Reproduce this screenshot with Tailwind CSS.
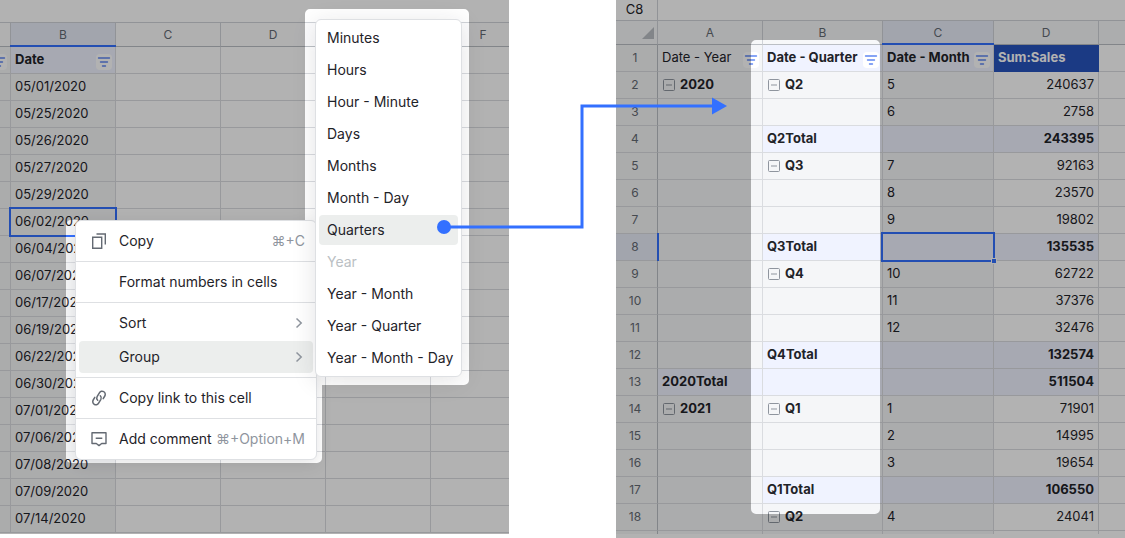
<!DOCTYPE html>
<html lang="en">
<head>
<meta charset="utf-8">
<meta name="viewport" content="width=device-width, initial-scale=1">
<title>Group dates in a pivot table</title>
<script src="https://cdn.jsdelivr.net/npm/@tailwindcss/browser@4"></script>
</head>
<body class="bg-white font-['Inter',sans-serif] text-[13px] text-[#1f2329]">
<svg class="hidden" aria-hidden="true">
  <symbol id="filter" viewBox="0 0 16 16"><path d="M2.5 4h11M4.5 8h7M6.5 12h3" fill="none" stroke="#5f86f2" stroke-width="1.4" stroke-linecap="round"/></symbol>
  <symbol id="minus" viewBox="0 0 12 12"><rect x=".5" y=".5" width="11" height="11" rx="1" fill="none" stroke="#8f959e"/><path d="M3 6h6" stroke="#8f959e"/></symbol>
  <symbol id="chevron" viewBox="0 0 16 16"><path d="M5.5 3.5 10.200 8l-4.700 4.500" fill="none" stroke="#8f959e" stroke-width="1.500"/></symbol>
</svg>
<main class="relative grid min-h-screen grid-cols-2 items-start gap-[107px] overflow-hidden">

  <!-- Source sheet -->
  <section class="relative overflow-hidden pb-px" aria-label="Source sheet">
    <div class="h-[23px] border-b border-[#d0d3d8]"></div>
    <table class="w-full table-fixed border-separate border-spacing-0 text-left [&_td]:border-r [&_td]:border-b [&_td]:border-[#dadce0] [&_td]:p-0 [&_td:last-child]:border-r-0 [&_tbody_th]:border-r [&_tbody_th]:border-b [&_tbody_th]:border-[#dadce0] [&_tbody_tr]:h-[27px] [&_tbody_td:nth-child(2)]:bg-[#f5f6f7] [&_tbody_td:nth-child(2)]:pl-1 [&_tbody_td:first-child]:bg-[#f5f6f7]">
      <colgroup><col class="w-[11px]"><col class="w-[105px]"><col class="w-[105px]"><col class="w-[105px]"><col class="w-[105px]"><col></colgroup>
      <thead>
        <tr class="h-6 text-center text-xs text-[#646a73] [&>th]:border-r [&>th]:border-b [&>th]:border-r-[#d0d3d8] [&>th]:border-b-[#bbbfc4] [&>th]:bg-[#fcfcfd] [&>th]:p-0 [&>th]:font-normal">
          <th></th>
          <th class="relative bg-[#e9edf8]!">B<span class="absolute -bottom-px -left-px -right-px h-0.5 bg-[#3370ff]"></span></th>
          <th>C</th><th>D</th><th></th>
          <th class="border-r-0! pl-[26px]!">F</th>
        </tr>
      </thead>
      <tbody>
        <tr>
          <td><div class="flex justify-end pt-1 pr-[3px]"><button class="size-4 shrink-0 rounded-sm bg-white" aria-label="Filter"><svg class="size-4"><use href="#filter"/></svg></button></div></td>
          <th class="bg-[#f0f3ff] p-0 pl-1"><div class="flex justify-between pr-[3px]"><span>Date</span><button class="mt-1 size-4 rounded-sm bg-white" aria-label="Filter Date"><svg class="size-4"><use href="#filter"/></svg></button></div></th>
          <td></td><td></td><td></td><td></td>
        </tr>
        <tr><td></td><td>05/01/2020</td><td></td><td></td><td></td><td></td></tr>
        <tr><td></td><td>05/25/2020</td><td></td><td></td><td></td><td></td></tr>
        <tr><td></td><td>05/26/2020</td><td></td><td></td><td></td><td></td></tr>
        <tr><td></td><td>05/27/2020</td><td></td><td></td><td></td><td></td></tr>
        <tr><td></td><td>05/29/2020</td><td></td><td></td><td></td><td></td></tr>
        <tr><td></td><td class="relative">06/02/2020<span class="absolute -inset-0.5 border-2 border-[#3370ff]"></span></td><td></td><td></td><td></td><td></td></tr>
        <tr><td></td><td>06/04/2020</td><td></td><td></td><td></td><td></td></tr>
        <tr><td></td><td>06/07/2020</td><td></td><td></td><td></td><td></td></tr>
        <tr><td></td><td>06/17/2020</td><td></td><td></td><td></td><td></td></tr>
        <tr><td></td><td>06/19/2020</td><td></td><td></td><td></td><td></td></tr>
        <tr><td></td><td>06/22/2020</td><td></td><td></td><td></td><td></td></tr>
        <tr><td></td><td>06/30/2020</td><td></td><td></td><td></td><td></td></tr>
        <tr><td></td><td>07/01/2020</td><td></td><td></td><td></td><td></td></tr>
        <tr><td></td><td>07/06/2020</td><td></td><td></td><td></td><td></td></tr>
        <tr><td></td><td>07/08/2020</td><td></td><td></td><td></td><td></td></tr>
        <tr><td></td><td>07/09/2020</td><td></td><td></td><td></td><td></td></tr>
        <tr><td></td><td>07/14/2020</td><td></td><td></td><td></td><td></td></tr>
      </tbody>
    </table>

    <!-- Context menu -->
    <div role="menu" aria-label="Cell menu" class="absolute top-[220px] left-[75px] w-[242px] rounded-md border border-[#dee0e3] bg-white text-sm shadow-[0_4px_16px_rgba(31,35,41,0.12)] [&_button]:flex [&_button]:h-8 [&_button]:w-full [&_button]:items-center [&_button]:rounded [&_button]:pr-2 [&_button]:pl-3 [&_button]:text-left [&>div]:border-b [&>div]:border-[#dee0e3] [&>div]:px-[3px] [&>div]:py-1 [&>div:last-child]:border-b-0">
      <div>
        <button role="menuitem"><svg class="mr-3 size-4" viewBox="0 0 16 16" fill="none" stroke="#646a73" stroke-width="1.400"><path d="M1.700 4.200h9v11h-9zM5.500 1h8.800v10.500"/></svg>Copy<kbd class="ml-auto font-['Inter',sans-serif] text-[#8f959e]">⌘+C</kbd></button>
      </div>
      <div><button role="menuitem"><span class="pl-7">Format numbers in cells</span></button></div>
      <div class="grid gap-0.5">
        <button role="menuitem"><span class="pl-7">Sort</span><svg class="-mr-0.5 ml-auto size-4"><use href="#chevron"/></svg></button>
        <button role="menuitem" class="bg-[#eceeed]"><span class="pl-7">Group</span><svg class="-mr-0.5 ml-auto size-4"><use href="#chevron"/></svg></button>
      </div>
      <div>
        <button role="menuitem"><svg class="mr-3 size-4" viewBox="0 0 16 16" fill="none" stroke="#646a73" stroke-width="1.500" stroke-linecap="round"><path d="M6.700 10.300a3 3 0 0 1-.6-3.600l2.300-3.900a3.100 3.100 0 0 1 4.300-1.100 3.100 3.100 0 0 1 1.100 4.300l-1.600 2.700"/><path d="M9.300 5.700a3 3 0 0 1 .6 3.600l-2.300 3.900a3.100 3.100 0 0 1-4.300 1.100A3.100 3.100 0 0 1 2.200 10l1.600-2.700"/></svg>Copy link to this cell</button>
      </div>
      <div>
        <button role="menuitem"><svg class="mr-3 size-4" viewBox="0 0 16 16" fill="none" stroke="#646a73" stroke-width="1.400" stroke-linejoin="round"><path d="M1 1.700h14v10.800h-4.300L8 14.600l-2.700-2.100H1zM4.700 7.200h6.600"/></svg>Add comment<kbd class="ml-auto font-['Inter',sans-serif] text-[#8f959e]">⌘+Option+M</kbd></button>
      </div>
    </div>

    <!-- Group submenu -->
    <div role="menu" aria-label="Group" class="absolute top-[19px] left-[315px] grid w-[147px] grid-cols-1 gap-0.5 rounded-md border border-[#dee0e3] bg-white p-[3px] text-sm shadow-[0_4px_24px_rgba(31,35,41,0.12)] [&>button]:h-[30px] [&>button]:rounded [&>button]:pl-2 [&>button]:text-left [&>button]:whitespace-nowrap">
      <button role="menuitem">Minutes</button>
      <button role="menuitem">Hours</button>
      <button role="menuitem">Hour - Minute</button>
      <button role="menuitem">Days</button>
      <button role="menuitem">Months</button>
      <button role="menuitem">Month - Day</button>
      <button role="menuitem" class="bg-[#eceeed]">Quarters</button>
      <button role="menuitem" disabled class="text-[#bbbfc4]">Year</button>
      <button role="menuitem">Year - Month</button>
      <button role="menuitem">Year - Quarter</button>
      <button role="menuitem">Year - Month - Day</button>
    </div>

    <!-- Dimmed layer, open around the menus -->
    <svg class="pointer-events-none absolute inset-0 size-full" aria-hidden="true"><path fill="#000" fill-opacity=".3" fill-rule="evenodd" d="M0 0H4000V4000H0ZM305 14a5 5 0 0 1 5-5H464a5 5 0 0 1 5 5V380a5 5 0 0 1-5 5H322V458a5 5 0 0 1-5 5H71a5 5 0 0 1-5-5V225a5 5 0 0 1 5-5H305Z"/></svg>
  </section>

  <!-- Pivot sheet -->
  <section class="relative min-h-[538px] overflow-hidden" aria-label="Pivot sheet">
    <div class="flex h-[21px] border-b border-[#d0d3d8]"><div class="flex w-[42px] items-start justify-center border-r border-[#d0d3d8] pr-1 leading-[18px]">C8</div></div>
    <table class="w-full table-fixed border-separate border-spacing-0 text-left [&_td]:border-r [&_td]:border-b [&_td]:border-[#dadce0] [&_td]:p-0 [&_td]:pl-1 [&_td:last-child]:border-r-0 [&_tbody_th]:border-r [&_tbody_th]:border-b [&_tbody_th]:border-[#dadce0] [&_tbody_th]:p-0 [&_tbody_tr]:h-[27px] [&_tbody_th:first-child]:border-r-[#bbbfc4] [&_tbody_th:first-child]:bg-[#f5f6f7] [&_tbody_th:first-child]:pr-[3px] [&_tbody_th:first-child]:text-center [&_tbody_th:first-child]:text-xs [&_tbody_th:first-child]:font-normal [&_tbody_th:first-child]:text-[#646a73] [&_td:nth-child(-n+4)]:bg-[#f5f6f8] [&_td:nth-child(5)]:pr-1 [&_td:nth-child(5)]:text-right">
      <colgroup><col class="w-[42px]"><col class="w-[105px]"><col class="w-[120px]"><col class="w-[111px]"><col class="w-[105px]"><col></colgroup>
      <thead>
        <tr class="h-6 text-center text-xs text-[#646a73] [&>th]:border-r [&>th]:border-b [&>th]:border-r-[#d0d3d8] [&>th]:border-b-[#bbbfc4] [&>th]:bg-[#f7f8f9] [&>th]:p-0 [&>th]:font-normal [&>th:last-child]:border-r-0">
          <th><svg class="ml-[26px] size-3" viewBox="0 0 12 12"><path d="M12 0v12H0z" fill="#bbbfc4"/></svg></th>
          <th>A</th><th>B</th>
          <th class="relative bg-[#e9edf8]!">C<span class="absolute -bottom-px -left-px -right-px h-0.5 bg-[#3370ff]"></span></th>
          <th>D</th><th></th>
        </tr>
      </thead>
      <tbody>
        <tr>
          <th>1</th>
          <td><div class="flex justify-between pr-[3px]"><span>Date - Year</span><button class="mt-1 size-4 rounded-sm bg-white" aria-label="Filter Date - Year"><svg class="size-4"><use href="#filter"/></svg></button></div></td>
          <th class="bg-[#f0f3ff] pl-1!"><div class="flex justify-between pr-[3px]"><span class="whitespace-nowrap">Date - Quarter</span><button class="mt-1 size-4 rounded-sm bg-white" aria-label="Filter Date - Quarter"><svg class="size-4"><use href="#filter"/></svg></button></div></th>
          <th class="bg-[#f0f3ff] pl-1!"><div class="flex justify-between pr-[3px]"><span class="whitespace-nowrap">Date - Month</span><button class="mt-1 size-4 rounded-sm bg-white" aria-label="Filter Date - Month"><svg class="size-4"><use href="#filter"/></svg></button></div></th>
          <th class="border-[#2853bd]! bg-[#2853bd] pl-1! text-white">Sum:Sales</th><td></td>
        </tr>
        <tr><th>2</th><td class="font-bold"><div class="flex items-center gap-[5px] pl-px"><button aria-label="Collapse 2020"><svg class="size-3"><use href="#minus"/></svg></button>2020</div></td><td class="font-bold"><div class="flex items-center gap-[5px] pl-px"><button aria-label="Collapse Q2"><svg class="size-3"><use href="#minus"/></svg></button>Q2</div></td><td>5</td><td>240637</td><td></td></tr>
        <tr><th>3</th><td></td><td></td><td>6</td><td>2758</td><td></td></tr>
        <tr class="font-bold"><th>4</th><td></td><td class="bg-[#f0f3ff]!">Q2Total</td><td class="bg-[#f0f3ff]!"></td><td class="bg-[#f0f3ff]">243395</td><td></td></tr>
        <tr><th>5</th><td></td><td class="font-bold"><div class="flex items-center gap-[5px] pl-px"><button aria-label="Collapse Q3"><svg class="size-3"><use href="#minus"/></svg></button>Q3</div></td><td>7</td><td>92163</td><td></td></tr>
        <tr><th>6</th><td></td><td></td><td>8</td><td>23570</td><td></td></tr>
        <tr><th>7</th><td></td><td></td><td>9</td><td>19802</td><td></td></tr>
        <tr class="font-bold"><th class="relative bg-[#e9edf8]!">8<span class="absolute -top-px -right-0.5 -bottom-px w-0.5 bg-[#3370ff]"></span></th><td></td><td class="bg-[#f0f3ff]!">Q3Total</td><td class="relative z-10 bg-[#f0f3ff]!"><span class="absolute -inset-0.5 border-2 border-[#3370ff]"></span><span class="absolute -right-1 -bottom-1 size-[6px] border border-white bg-[#3370ff]"></span></td><td class="bg-[#f0f3ff]">135535</td><td></td></tr>
        <tr><th>9</th><td></td><td class="font-bold"><div class="flex items-center gap-[5px] pl-px"><button aria-label="Collapse Q4"><svg class="size-3"><use href="#minus"/></svg></button>Q4</div></td><td>10</td><td>62722</td><td></td></tr>
        <tr><th>10</th><td></td><td></td><td>11</td><td>37376</td><td></td></tr>
        <tr><th>11</th><td></td><td></td><td>12</td><td>32476</td><td></td></tr>
        <tr class="font-bold"><th>12</th><td></td><td class="bg-[#f0f3ff]!">Q4Total</td><td class="bg-[#f0f3ff]!"></td><td class="bg-[#f0f3ff]">132574</td><td></td></tr>
        <tr class="font-bold"><th>13</th><td class="bg-[#f0f3ff]!">2020Total</td><td class="bg-[#f0f3ff]!"></td><td class="bg-[#f0f3ff]!"></td><td class="bg-[#f0f3ff]">511504</td><td></td></tr>
        <tr><th>14</th><td class="font-bold"><div class="flex items-center gap-[5px] pl-px"><button aria-label="Collapse 2021"><svg class="size-3"><use href="#minus"/></svg></button>2021</div></td><td class="font-bold"><div class="flex items-center gap-[5px] pl-px"><button aria-label="Collapse Q1"><svg class="size-3"><use href="#minus"/></svg></button>Q1</div></td><td>1</td><td>71901</td><td></td></tr>
        <tr><th>15</th><td></td><td></td><td>2</td><td>14995</td><td></td></tr>
        <tr><th>16</th><td></td><td></td><td>3</td><td>19654</td><td></td></tr>
        <tr class="font-bold"><th>17</th><td></td><td class="bg-[#f0f3ff]!">Q1Total</td><td class="bg-[#f0f3ff]!"></td><td class="bg-[#f0f3ff]">106550</td><td></td></tr>
        <tr><th>18</th><td></td><td class="font-bold"><div class="flex items-center gap-[5px] pl-px"><button aria-label="Collapse Q2 2021"><svg class="size-3"><use href="#minus"/></svg></button>Q2</div></td><td>4</td><td>24041</td><td></td></tr>
        <tr class="h-[3px]! [&>*]:border-b-0!"><th></th><td></td><td></td><td></td><td></td><td></td></tr>
      </tbody>
    </table>

    <!-- Dimmed layer, open around the quarter column -->
    <svg class="pointer-events-none absolute inset-0 z-20 size-full" aria-hidden="true"><path fill="#000" fill-opacity=".3" fill-rule="evenodd" d="M0 0H4000V4000H0ZM135 45a5 5 0 0 1 5-5H259a5 5 0 0 1 5 5V509a5 5 0 0 1-5 5H140a5 5 0 0 1-5-5Z"/></svg>
  </section>

  <!-- Connector from the Quarters item to the pivot sheet -->
  <svg class="pointer-events-none absolute top-0 left-0 z-30 h-[240px] w-[740px]" viewBox="0 0 740 240" fill="#3370ff" aria-hidden="true"><path d="M444 227H582V106H713" fill="none" stroke="#3370ff" stroke-width="3"/><circle cx="444" cy="227" r="7"/><path d="M712 97.500 727 106l-15 8.500z"/></svg>
</main>
</body>
</html>
